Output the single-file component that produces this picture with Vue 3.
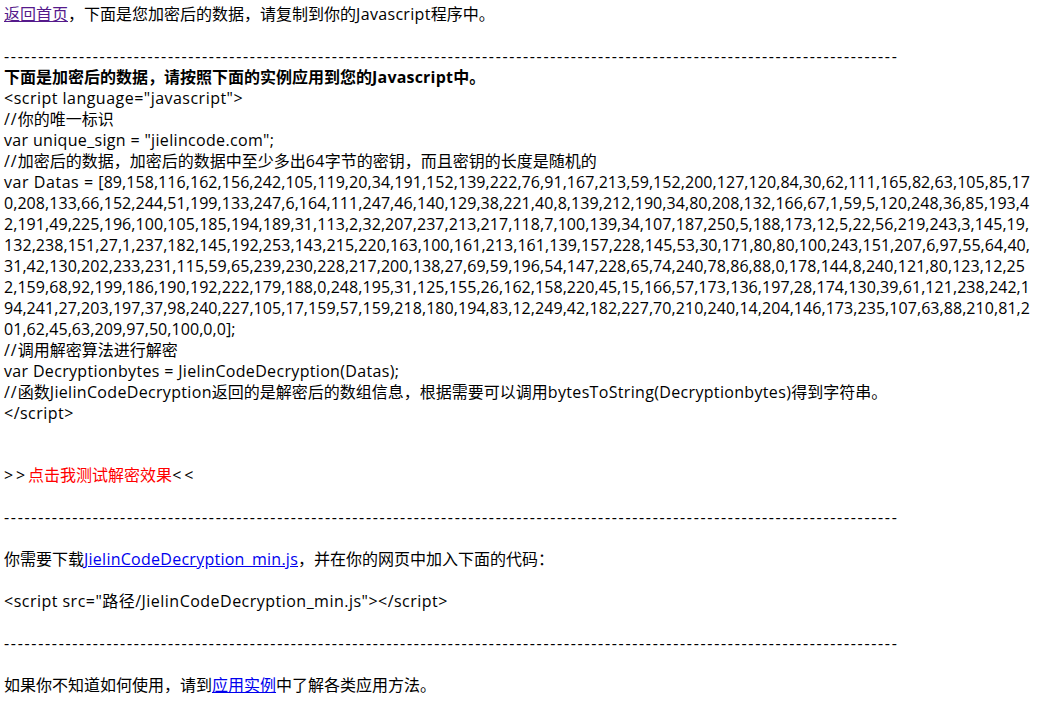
<template>
  <div class="page">
    <div><a href="#" class="visited">返回首页</a>，下面是您加密后的数据，请复制到你的<span class="lat">Javascript</span>程序中。</div>
    <br />
    <div class="dash">{{ dashes }}</div>
    <div class="bold">下面是加密后的数据，请按照下面的实例应用到您的<span class="lat-b">Javascript</span>中。</div>
    <div class="sym">&lt;script language="javascript"&gt;</div>
    <div><span class="sl">//</span>你的唯一标识</div>
    <div class="lat">var unique_sign = "jielincode.com";</div>
    <div><span class="sl">//</span>加密后的数据，加密后的数据中至少多出<span class="lat">64</span>字节的密钥，而且密钥的长度是随机的</div>
    <div class="nums"><span class="head">var Datas = </span>{{ dataLines[0] }}</div>
    <div v-for="line in dataLines.slice(1)" :key="line" class="nums">{{ line }}</div>
    <div><span class="sl">//</span>调用解密算法进行解密</div>
    <div class="lat">var Decryptionbytes = JielinCodeDecryption(Datas);</div>
    <div><span class="sl">//</span>函数<span class="lat">JielinCodeDecryption</span>返回的是解密后的数组信息，根据需要可以调用<span class="lat">bytesToString(Decryptionbytes)</span>得到字符串。</div>
    <div class="sym">&lt;/script&gt;</div>
    <br />
    <br />
    <div><span class="arrows">&gt;&gt;</span><a href="#" class="red">点击我测试解密效果</a><span class="arrows">&lt;&lt;</span></div>
    <br />
    <div class="dash">{{ dashes }}</div>
    <br />
    <div>你需要下载<a href="#" class="link file">JielinCodeDecryption_min.js</a>，并在你的网页中加入下面的代码：</div>
    <br />
    <div class="sym">&lt;script src="路径/JielinCodeDecryption_min.js"&gt;&lt;/script&gt;</div>
    <br />
    <div class="dash">{{ dashes }}</div>
    <br />
    <div>如果你不知道如何使用，请到<a href="#" class="link">应用实例</a>中了解各类应用方法。</div>
  </div>
</template>

<script setup>
const dashes = '-'.repeat(131)

// wrapped by hand, the array breaks in the middle of numbers
const dataLines = [
  '[89,158,116,162,156,242,105,119,20,34,191,152,139,222,76,91,167,213,59,152,200,127,120,84,30,62,111,165,82,63,105,85,17',
  '0,208,133,66,152,244,51,199,133,247,6,164,111,247,46,140,129,38,221,40,8,139,212,190,34,80,208,132,166,67,1,59,5,120,248,36,85,193,4',
  '2,191,49,225,196,100,105,185,194,189,31,113,2,32,207,237,213,217,118,7,100,139,34,107,187,250,5,188,173,12,5,22,56,219,243,3,145,19,',
  '132,238,151,27,1,237,182,145,192,253,143,215,220,163,100,161,213,161,139,157,228,145,53,30,171,80,80,100,243,151,207,6,97,55,64,40,',
  '31,42,130,202,233,231,115,59,65,239,230,228,217,200,138,27,69,59,196,54,147,228,65,74,240,78,86,88,0,178,144,8,240,121,80,123,12,25',
  '2,159,68,92,199,186,190,192,222,179,188,0,248,195,31,125,155,26,162,158,220,45,15,166,57,173,136,197,28,174,130,39,61,121,238,242,1',
  '94,241,27,203,197,37,98,240,227,105,17,159,57,159,218,180,194,83,12,249,42,182,227,70,210,240,14,204,146,173,235,107,63,88,210,81,2',
  '01,62,45,63,209,97,50,100,0,0];'
]
</script>

<style scoped>
.page {
  padding: 4.4px 4px 0;
  font-family: "Open Sans", "Noto Sans CJK SC", sans-serif;
  font-size: 16px;
  line-height: 20.95px;
  color: #000;
  white-space: nowrap;
}

.dash {
  letter-spacing: 1.68px;
}

.bold {
  font-weight: 700;
}

.lat {
  letter-spacing: 0.33px;
}

.lat-b {
  letter-spacing: 0.2px;
}

.sym {
  letter-spacing: 0.48px;
}

.sl {
  letter-spacing: 1px;
}

.nums {
  letter-spacing: 0.06px;
}

.head {
  letter-spacing: 0.55px;
}

.arrows {
  letter-spacing: 2.9px;
}

.visited {
  color: #551a8b;
}

.link {
  color: #0000ee;
}

.file {
  letter-spacing: 0.26px;
}

.red {
  color: #f00;
  text-decoration: none;
}
</style>

<style>
html,
body {
  background: #fff;
}
</style>
